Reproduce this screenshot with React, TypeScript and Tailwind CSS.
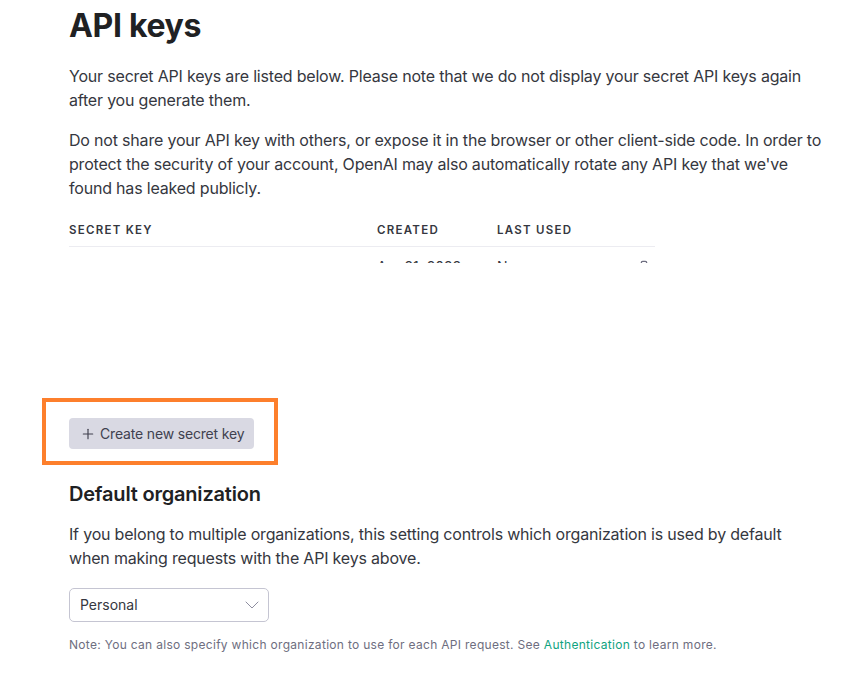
import React from 'react';
import { Plus, Trash2, ChevronDown } from 'lucide-react';

const ApiKeysPage: React.FC = () => {
    return (
        <div className="min-h-screen bg-white font-['Inter',sans-serif] text-[#353740] pl-[69px] pt-[6px]">
            <div className="w-[754px]">
                <h1 className="text-[32px] leading-[40px] font-bold text-[#202123] tracking-[-0.01em]">API keys</h1>

                <p className="mt-[18px] text-base leading-6 tracking-[-0.012em]">
                    Your secret API keys are listed below. Please note that we do not display your secret API keys again after you generate them.
                </p>
                <p className="mt-4 text-base leading-6 tracking-[-0.012em]">
                    Do not share your API key with others, or expose it in the browser or other client-side code. In order to protect the security of your account, OpenAI may also automatically rotate any API key that we've found has leaked publicly.
                </p>

                {/* table is cut off in the screenshot */}
                <div className="mt-[16px] h-[47px] overflow-hidden">
                    <table className="w-[586px] border-collapse text-left">
                        <thead>
                            <tr className="h-[30px] border-b border-[#ececf1]">
                                <th className="w-[308px] text-[11.5px] font-semibold uppercase tracking-[0.11em] text-[#353740]">Secret key</th>
                                <th className="w-[120px] text-[11.5px] font-semibold uppercase tracking-[0.11em] text-[#353740]">Created</th>
                                <th className="w-[130px] text-[11.5px] font-semibold uppercase tracking-[0.11em] text-[#353740]">Last used</th>
                                <th></th>
                            </tr>
                        </thead>
                        <tbody>
                            <tr>
                                <td className="pt-[10px] text-sm leading-5 text-[#6e6e80]"></td>
                                <td className="pt-[10px] text-sm leading-5 text-[#353740]">Apr 21, 2023</td>
                                <td className="pt-[10px] text-sm leading-5 text-[#353740]">Never</td>
                                <td className="pt-[12px] text-[#6e6e80]">
                                    <Trash2 className="h-4 w-4 ml-[9px]" />
                                </td>
                            </tr>
                        </tbody>
                    </table>
                </div>

                <div className="mt-[155px] relative w-fit">
                    <button className="flex items-center gap-[4px] h-[31px] pl-[11px] pr-[10px] rounded-[4px] bg-[#d9d9e3] text-sm tracking-[-0.012em] text-[#40414f]">
                        <Plus className="h-4 w-4" strokeWidth={1.75} />
                        Create new secret key
                    </button>
                    <div className="absolute left-[-27px] top-[-20px] right-[-24px] bottom-[-16px] border-4 border-[#fd7f2c] pointer-events-none"></div>
                </div>

                <h2 className="mt-[31px] text-xl leading-7 font-semibold text-[#202123] tracking-[-0.01em]">Default organization</h2>
                <p className="mt-[14px] text-base leading-6 tracking-[-0.012em]">
                    If you belong to multiple organizations, this setting controls which organization is used by default when making requests with the API keys above.
                </p>

                <div className="mt-[18px] flex items-center justify-between w-[200px] h-[34px] pl-[10px] pr-[4px] border border-[#c5c5d2] rounded-[5px] text-sm text-[#353740]">
                    <span>Personal</span>
                    <ChevronDown className="h-6 w-6 text-[#8e8ea0]" strokeWidth={1} />
                </div>

                <p className="mt-[14px] text-xs leading-[18px] tracking-[0.025em] text-[#6e6e80]">
                    Note: You can also specify which organization to use for each API request. See <a href="#" className="text-[#10a37f]">Authentication</a> to learn more.
                </p>
            </div>
        </div>
    );
};

export default function App() {
    return <ApiKeysPage />;
}
